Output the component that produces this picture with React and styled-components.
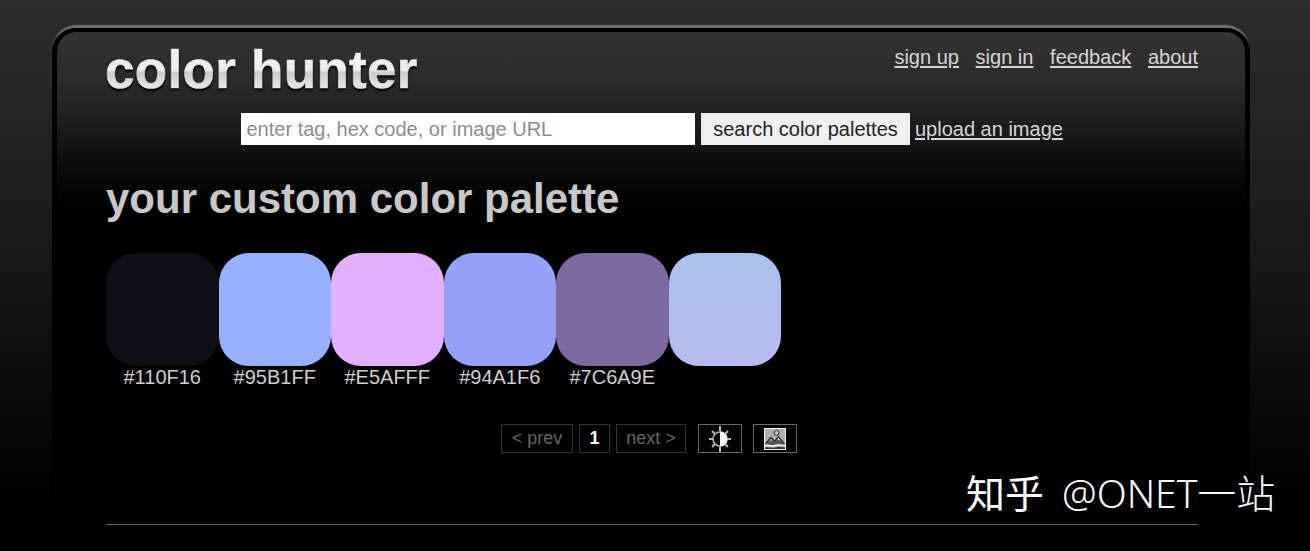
import React from "react";
import styled, { createGlobalStyle } from "styled-components";

const Global = createGlobalStyle`
  html, body { margin: 0; padding: 0; height: 551px; overflow: hidden; }
  body {
    background: linear-gradient(180deg, #2b2b2b 0, #262626 100px, #1a1a1a 240px, #0a0a0a 400px, #000 510px);
    font-family: "Liberation Sans", Arial, sans-serif;
  }
`;

const Page = styled.div`
  position: relative;
  width: 1310px;
  height: 551px;
  overflow: hidden;
  padding-top: 28px;
  box-sizing: border-box;
`;

const Panel = styled.main`
  width: 1198px;
  height: 560px;
  margin-left: 52px;
  box-sizing: border-box;
  border: 5px solid #000;
  border-top-width: 4px;
  border-bottom: 0;
  border-radius: 24px 24px 0 0;
  box-shadow: 0 -4px 1px -1px #6f6f6f;
  padding: 0 47px 0 49px;
  background: linear-gradient(180deg, #333 0, #2a2a2a 50px, #1c1c1c 95px, #0c0c0c 135px, #030303 165px, #000 190px);
`;

const Header = styled.header`
  display: flex;
  justify-content: space-between;
  align-items: flex-start;
  height: 81px;
`;

const Logo = styled.h1`
  margin: 4px 0 0 -1px;
  font-size: 53px;
  line-height: 68px;
  font-weight: 700;
  letter-spacing: 0.3px;
  -webkit-text-stroke: 0.7px transparent;
  background: linear-gradient(180deg, #f6f6f6 0, #ececec 50%, #c9cccd 54%, #e4e6e7 74%, #cdd0d1 100%);
  -webkit-background-clip: text;
  background-clip: text;
  color: transparent;
  filter: drop-shadow(0 2px 1px #000);
`;

const Nav = styled.nav`
  display: flex;
  gap: 16.7px;
  margin-top: 12px;
`;

const TextLink = styled.a`
  font-size: 20px;
  line-height: 26px;
  color: #d6d6d6;
  text-decoration: underline;
  text-underline-offset: 2px;
`;

const SearchRow = styled.form`
  display: flex;
  align-items: center;
  margin-left: 135px;
  height: 32px;
`;

const SearchBox = styled.div`
  width: 454px;
  height: 32px;
  background: #fff;
  color: #8c8c8c;
  font-size: 20px;
  line-height: 32px;
  padding-left: 5.5px;
  box-sizing: border-box;
  margin-right: 6px;
`;

const SearchButton = styled.div`
  width: 209px;
  height: 32px;
  background: #efefef;
  color: #222;
  font-size: 20px;
  line-height: 32px;
  text-align: center;
  margin-right: 5px;
`;

const Title = styled.h2`
  margin: 31px 0 0;
  font-size: 42px;
  line-height: 46px;
  font-weight: 700;
  color: #c8c8c8;
`;

const Palette = styled.div`
  display: flex;
  margin-top: 31px;
`;

const Column = styled.div`
  width: 112.5px;
  display: flex;
  flex-direction: column;
  align-items: center;
`;

const Swatch = styled.div`
  width: 112.5px;
  height: 113px;
  border-radius: 30px;
  background: ${(p) => p.$fill};
`;

const Hex = styled.span`
  font-size: 20px;
  line-height: 23px;
  color: #cfcfcf;
`;

const Pager = styled.div`
  display: flex;
  align-items: stretch;
  height: 29px;
  margin: 35px 0 0 395px;
`;

const PageBox = styled.div`
  box-sizing: border-box;
  border: 1px solid ${(p) => p.$line || "#333"};
  width: ${(p) => p.$w}px;
  margin-left: ${(p) => p.$gap || 0}px;
  color: ${(p) => p.$ink || "#666"};
  font-size: 18px;
  font-weight: ${(p) => (p.$bold ? 700 : 400)};
  line-height: 27px;
  text-align: center;
  display: flex;
  align-items: center;
  justify-content: center;
`;

const Rule = styled.hr`
  border: 0;
  height: 1px;
  background: #606060;
  margin: 71px 0 0;
`;

const Watermark = styled.div`
  position: absolute;
  left: 966px;
  top: 464px;
  display: flex;
  align-items: baseline;
  color: #fff;
  font-family: "Noto Sans CJK SC", sans-serif;
  font-size: 39px;
  line-height: 54px;
  white-space: nowrap;
`;

const WatermarkBrand = styled.span`
  font-size: 39px;
  font-weight: 400;
  margin-right: 18px;
`;

const WatermarkName = styled.span`
  font-family: "Noto Sans", "Noto Sans CJK SC", sans-serif;
  font-weight: 300;
`;

const SunIcon = () => (
  <svg width="26" height="26" viewBox="0 0 26 26" aria-hidden="true">
    <g stroke="#b8b8b8" strokeWidth="2">
      <path d="M13 0v5M13 21v5M2 13h4M20 13h4M5 5l3.5 3.5M17.5 17.5 21 21M21 5l-3.5 3.5M8.5 17.5 5 21" />
    </g>
    <circle cx="13" cy="13" r="7" fill="#000" stroke="#b8b8b8" strokeWidth="1.5" />
    <path d="M13 5.5a7.5 7.5 0 0 1 0 15z" fill="#fff" />
  </svg>
);

const PictureIcon = () => (
  <svg width="22" height="22" viewBox="0 0 22 22" aria-hidden="true">
    <rect width="22" height="22" fill="#f2f2f2" />
    <rect x="1" y="1" width="20" height="20" fill="#aeaeae" />
    <circle cx="12.5" cy="5" r="2.4" fill="#cfcfcf" stroke="#222" strokeWidth="1" />
    <path d="M1.5 16 7 9.5l3.5 4L14.5 9l6 7" fill="none" stroke="#222" strokeWidth="1.3" />
    <path d="M3 16l4-5 3 3.500 4.500-4 5 5.500v1H3z" fill="#555" />
    <path d="M5.500 12.500 7 11l1.500 1.800-1.500-.6zM13 11.500l1.500-1.300 1.700 2-1.700-.5z" fill="#fff" />
    <path d="M1 17c3-1.500 5 1 8 0s6-1 12 0v1.200c-6-1-9 0-12 .6s-5-1-8 0z" fill="#f0f0f0" />
    <path d="M1 19.500c4-1 6 .6 10 0s6-.6 10 0V21H1z" fill="#333" />
  </svg>
);

const swatches = [
  { fill: "#110F16", hex: "#110F16" },
  { fill: "#95B1FF", hex: "#95B1FF" },
  { fill: "#E5AFFF", hex: "#E5AFFF" },
  { fill: "#94A1F6", hex: "#94A1F6" },
  { fill: "#7C6A9E", hex: "#7C6A9E" },
  { fill: "linear-gradient(180deg, #A8C2EE, #B8BCF0)", hex: "" },
];

export default function App() {
  return (
    <Page>
      <Global />
      <Panel>
        <Header>
          <Logo>color hunter</Logo>
          <Nav>
            <TextLink>sign up</TextLink>
            <TextLink>sign in</TextLink>
            <TextLink>feedback</TextLink>
            <TextLink>about</TextLink>
          </Nav>
        </Header>
        <SearchRow>
          <SearchBox>enter tag, hex code, or image URL</SearchBox>
          <SearchButton>search color palettes</SearchButton>
          <TextLink>upload an image</TextLink>
        </SearchRow>
        <Title>your custom color palette</Title>
        <Palette>
          {swatches.map((s, i) => (
            <Column key={i}>
              <Swatch $fill={s.fill} />
              <Hex>{s.hex}</Hex>
            </Column>
          ))}
        </Palette>
        <Pager>
          <PageBox $w={72}>&lt; prev</PageBox>
          <PageBox $w={31} $gap={6} $ink="#fff" $bold>1</PageBox>
          <PageBox $w={70} $gap={6}>next &gt;</PageBox>
          <PageBox $w={44} $gap={12} $line="#6a6a6a"><SunIcon /></PageBox>
          <PageBox $w={44} $gap={11} $line="#6a6a6a"><PictureIcon /></PageBox>
        </Pager>
        <Rule />
      </Panel>
      <Watermark>
        <WatermarkBrand>知乎</WatermarkBrand>
        <WatermarkName>@ONET一站</WatermarkName>
      </Watermark>
    </Page>
  );
}
